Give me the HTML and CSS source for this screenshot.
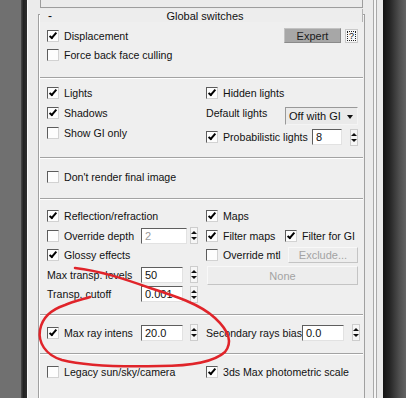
FILE: index.html
```html
<!DOCTYPE html>
<html lang="en">
<head>
    <meta charset="UTF-8">
    <meta name="viewport" content="width=device-width, initial-scale=1.0">
    <title>Global switches</title>
    <link rel="stylesheet" href="styles.css">
</head>
<body>
    <div class="screen">
        <div class="bg-left"></div>
        <div class="edge-left"></div>

        <div class="panel">
            <div class="gutter-l"></div>

            <div class="rollouts">
                <div class="prev-rollout"></div>

                <div class="rollout">
                    <div class="rollout-head">
                        <span class="toggle">-</span>
                        <span class="title">Global switches</span>
                    </div>

                    <!-- geometry -->
                    <div class="section s1">
                        <div class="row">
                            <span class="cb on"></span>Displacement
                            <span class="btn expert">Expert</span>
                            <span class="help"><span class="help-inner">?</span></span>
                        </div>
                        <div class="row"><span class="cb"></span>Force back face culling</div>
                    </div>

                    <!-- lighting -->
                    <div class="section s2 cols">
                        <div class="col-l">
                            <div class="row"><span class="cb on"></span>Lights</div>
                            <div class="row"><span class="cb on"></span>Shadows</div>
                            <div class="row"><span class="cb"></span>Show GI only</div>
                        </div>
                        <div class="col-r">
                            <div class="row"><span class="cb on"></span>Hidden lights</div>
                            <div class="row row-select">
                                <span class="lbl-top">Default lights</span>
                                <span class="select">Off with GI</span>
                            </div>
                            <div class="row row-prob">
                                <span class="cb on"></span>Probabilistic lights
                                <span class="field push small">8</span>
                                <span class="spin gap8"></span>
                            </div>
                        </div>
                    </div>

                    <!-- rendering -->
                    <div class="section s3">
                        <div class="row"><span class="cb"></span>Don't render final image</div>
                    </div>

                    <!-- materials -->
                    <div class="section s4 cols">
                        <div class="col-l">
                            <div class="row"><span class="cb on"></span>Reflection/refraction</div>
                            <div class="row">
                                <span class="lbl-box"><span class="cb"></span>Override depth</span>
                                <span class="field wide disabled">2</span>
                                <span class="spin"></span>
                            </div>
                            <div class="row"><span class="cb on"></span>Glossy effects</div>
                            <div class="row">
                                <span class="lbl-box">Max transp. levels</span>
                                <span class="field">50</span>
                                <span class="spin"></span>
                            </div>
                            <div class="row">
                                <span class="lbl-box">Transp. cutoff</span>
                                <span class="field">0.001</span>
                                <span class="spin"></span>
                            </div>
                        </div>
                        <div class="col-r">
                            <div class="row"><span class="cb on"></span>Maps</div>
                            <div class="row">
                                <span class="pair"><span class="cb on"></span>Filter maps</span>
                                <span class="cb on"></span>Filter for GI
                            </div>
                            <div class="row">
                                <span class="cb"></span>Override mtl
                                <span class="btn flat exclude">Exclude...</span>
                            </div>
                            <div class="row row-none">
                                <span class="btn flat none">None</span>
                            </div>
                        </div>
                    </div>

                    <!-- raytracing -->
                    <div class="section s5 cols">
                        <div class="col-l">
                            <div class="row">
                                <span class="lbl-box"><span class="cb on"></span>Max ray intens</span>
                                <span class="field">20.0</span>
                                <span class="spin"></span>
                            </div>
                        </div>
                        <div class="col-r">
                            <div class="row">
                                Secondary rays bias
                                <span class="field push">0.0</span>
                                <span class="spin gap8"></span>
                            </div>
                        </div>
                    </div>

                    <!-- compatibility -->
                    <div class="section s6 cols">
                        <div class="col-l">
                            <div class="row"><span class="cb"></span>Legacy sun/sky/camera</div>
                        </div>
                        <div class="col-r">
                            <div class="row"><span class="cb on"></span>3ds Max photometric scale</div>
                        </div>
                    </div>
                </div>
            </div>

            <div class="gutter-r"><div class="rail"></div></div>
        </div>

        <div class="edge-right"></div>
    </div>

    <svg class="annotation" width="406" height="398" viewBox="0 0 406 398">
        <path d="M75,268 C100,271 122,278 150,288 C175,296 200,304 215,318 C228,330 233,342 225,352 C214,362 190,366 160,366 C120,367 85,366 62,360 C45,355 38,342 40,330 C42,318 50,310 65,305 C72,302 80,300 90,297"
              fill="none" stroke="#e0242a" stroke-width="2.5" stroke-linecap="round"/>
    </svg>
</body>
</html>
```

FILE: styles.css
```css
body {
    margin: 0;
    width: 406px;
    height: 398px;
    overflow: hidden;
    background: #6d6d6d;
    font-family: "Liberation Sans", Arial, sans-serif;
    font-size: 10.6px;
    color: #111;
    position: relative;
}

.screen {
    display: flex;
    height: 398px;
}

.bg-left {
    width: 21px;
    background: #707070;
}

.edge-left {
    width: 6px;
    background: linear-gradient(to right, #4a4a4a, #222 40%, #2e2e2e);
}

.edge-right {
    flex: 1;
    background: linear-gradient(to right, #141414 0%, #262626 30%, #4e4e4e 70%, #646464);
}

.panel {
    width: 356px;
    display: flex;
    background: #ebebeb;
}

.gutter-l {
    width: 11px;
    box-sizing: border-box;
    border-left: 1px solid #fafafa;
}

.gutter-r {
    width: 18px;
    padding-left: 8px;
    box-sizing: border-box;
}

.gutter-r .rail {
    width: 2px;
    height: 100%;
    border-left: 1px solid #a9a9a9;
    border-right: 1px solid #a9a9a9;
    background: #f4f4f4;
}

.rollouts {
    width: 327px;
    display: flex;
    flex-direction: column;
}

.prev-rollout {
    margin: 0 2px;
    height: 7px;
    border: 1px solid #9d9d9d;
    border-top: none;
}

.rollout {
    margin-top: 6px;
    flex: 1;
    border: 1px solid #a0a0a0;
    border-bottom: none;
    box-shadow: inset 1px 1px 0 #fff;
    background: #efefef;
}

.rollout-head {
    margin: -6px 1px 0;
    height: 13px;
    display: flex;
    align-items: center;
    background: #ededed;
    border-right: 1px solid #b4b4b4;
    position: relative;
}

.rollout-head .toggle {
    width: 0;
    padding-left: 8px;
    font-size: 12px;
}

.rollout-head .title {
    flex: 1;
    text-align: center;
    font-size: 11px;
}

.section {
    margin: 0 1px;
    padding: 0 5px 0 7px;
    box-sizing: border-box;
    border-bottom: 1px solid #a3a3a3;
    box-shadow: 0 1px 0 #fff;
}

.s1 { height: 56px; padding-top: 4px; }
.s2 { height: 80px; padding-top: 5px; }
.s3 { height: 41px; padding-top: 9px; }
.s4 { height: 116px; padding-top: 7.5px; }
.s5 { height: 39px; padding-top: 8px; }
.s6 { padding-top: 8px; border-bottom: none; box-shadow: none; }

.cols {
    display: flex;
}

.col-l {
    width: 159px;
    flex: none;
}

.col-r {
    flex: 1;
}

.row {
    display: flex;
    align-items: center;
    height: 19px;
    white-space: nowrap;
}

.s2 .row { height: 20px; }
.s4 .row { height: 19.5px; }

.s2 .row-select {
    height: 24px;
    align-items: flex-start;
}

.s2 .row-prob { height: 20px; }

.lbl-top {
    padding-top: 4px;
}

.cb {
    width: 10px;
    height: 10px;
    flex: none;
    margin-right: 5px;
    border: 1px solid;
    border-color: #5c5c5c #d2d2d2 #d2d2d2 #5c5c5c;
    background: #fdfdfd;
    position: relative;
}

.cb.on::after {
    content: "";
    position: absolute;
    left: 3px;
    top: 0;
    width: 2px;
    height: 6px;
    border: solid #000;
    border-width: 0 2px 2px 0;
    transform: rotate(40deg);
}

.lbl-box {
    width: 94px;
    display: flex;
    align-items: center;
    flex: none;
}

.field {
    width: 37px;
    height: 14px;
    line-height: 14px;
    padding-left: 3px;
    margin-right: 7px;
    flex: none;
    background: #fff;
    border: 1px solid;
    border-color: #5e5e5e #e2e2e2 #e2e2e2 #5e5e5e;
    font-size: 11px;
}

.field.wide {
    width: 41px;
    margin-right: 3px;
}

.field.small {
    width: 25px;
}

.field.disabled {
    color: #9a9a9a;
}

.push {
    margin-left: auto;
    margin-right: 0;
}

.spin {
    width: 6px;
    height: 15px;
    flex: none;
    border: 1px solid #cdcdcd;
    background: #f6f6f6;
    position: relative;
}

.spin.gap8 {
    margin-left: 8px;
}

.spin::before,
.spin::after {
    content: "";
    position: absolute;
    left: 0;
    border-left: 3px solid transparent;
    border-right: 3px solid transparent;
}

.spin::before {
    top: 3px;
    border-bottom: 3px solid #111;
}

.spin::after {
    bottom: 3px;
    border-top: 3px solid #111;
}

.select {
    margin-left: auto;
    margin-top: 4px;
    width: 73px;
    height: 18px;
    box-sizing: border-box;
    padding-left: 3px;
    display: flex;
    align-items: center;
    border: 1px solid;
    border-color: #999 #f4f4f4 #f4f4f4 #999;
    background: #eaeaea;
    font-size: 11px;
    position: relative;
}

.select::after {
    content: "";
    position: absolute;
    right: 4px;
    top: 7px;
    border-left: 3.5px solid transparent;
    border-right: 3.5px solid transparent;
    border-top: 4px solid #111;
}

.btn {
    display: flex;
    align-items: center;
    justify-content: center;
    box-sizing: border-box;
    flex: none;
}

.btn.expert {
    margin-left: auto;
    width: 57px;
    height: 15px;
    background: #a7a7a7;
    border: 1px solid;
    border-color: #c2c2c2 #8a8a8a #8a8a8a #c2c2c2;
    color: #1c1c1c;
    font-size: 11px;
}

.help {
    margin-left: 4px;
    width: 13px;
    height: 14px;
    box-sizing: border-box;
    padding: 1px;
    border: 1px solid #c9c9c9;
    background: #f7f7f7;
    display: flex;
}

.help-inner {
    flex: 1;
    border: 1px dotted #222;
    font-size: 9px;
    line-height: 9px;
    text-align: center;
}

.btn.flat {
    background: #ededed;
    border: 1px solid;
    border-color: #f8f8f8 #c4c4c4 #c4c4c4 #f8f8f8;
    color: #a3a3a3;
    font-size: 11px;
}

.btn.exclude {
    margin-left: auto;
    width: 70px;
    height: 16px;
}

.btn.none {
    margin-left: 1px;
    width: 151px;
    height: 19px;
}

.s4 .row-none {
    height: 21px;
}

.pair {
    width: 79px;
    display: flex;
    align-items: center;
    flex: none;
}

.annotation {
    position: absolute;
    left: 0;
    top: 0;
    pointer-events: none;
}
```
